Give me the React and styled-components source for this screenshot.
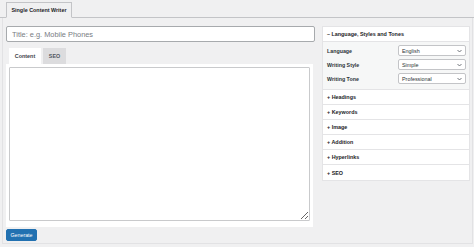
import React from "react";
import styled, { createGlobalStyle } from "styled-components";

const Global = createGlobalStyle`
  html, body { margin: 0; padding: 0; background: #f0f0f1; }
  body { font-family: "Liberation Sans", Arial, sans-serif; color: #1d2327; width: 474px; height: 247px; overflow: hidden; -webkit-font-smoothing: antialiased; }
  * { box-sizing: border-box; }
`;

const NavWrapper = styled.div`
  display: flex;
  height: 18px;
  padding: 2px 0 0 6px;
  border-bottom: 1px solid #c3c4c7;
`;

const NavTab = styled.div`
  width: 66px;
  height: 16px;
  margin-bottom: -1px;
  border: 1px solid #c3c4c7;
  border-bottom-color: #f0f0f1;
  background: #f0f0f1;
  font-size: 5.4px;
  font-weight: 700;
  display: flex;
  align-items: center;
  justify-content: center;
  color: #1d2327;
`;

const Wrap = styled.div`
  margin: 0 1px 0 2px;
  height: 226px;
  border: 1px solid #e2e2e4;
  border-top: none;
  padding: 8px 2px 0 3px;
  display: grid;
  grid-template-columns: 309px 148px;
  column-gap: 7px;
  align-items: start;
`;

const LeftCol = styled.div`
  display: flex;
  flex-direction: column;
`;

const TitleInput = styled.input`
  width: 309px;
  height: 16px;
  border: 1px solid #a7aaad;
  border-radius: 2px;
  background: #fff;
  padding: 0 5px;
  font-family: inherit;
  font-size: 7.4px;
  outline: none;
  &::placeholder { color: #787c82; }
`;

const Tabs = styled.div`
  display: flex;
  gap: 2px;
  margin: 6px 0 0 3px;
`;

const Tab = styled.div`
  height: 16px;
  width: ${(p) => p.$w}px;
  display: flex;
  align-items: center;
  justify-content: center;
  font-size: 5.4px;
  font-weight: 700;
  color: ${(p) => (p.$active ? "#3c434a" : "#50575e")};
  background: ${(p) => (p.$active ? "#fff" : "#dcdcde")};
`;

const ContentPanel = styled.div`
  width: 307px;
  height: 163px;
  background: #fff;
  padding: 3px 3px 6px 3px;
  display: flex;
`;

const TextArea = styled.textarea`
  flex: 1;
  height: 154px;
  border: 1px solid #c9cacc;
  border-radius: 1px;
  resize: both;
  outline: none;
  background: #fff;
`;

const Button = styled.button`
  align-self: flex-start;
  margin-top: 2px;
  height: 12px;
  width: 31px;
  padding: 0;
  border: 1px solid #2271b1;
  border-radius: 2px;
  background: #2271b1;
  color: #fff;
  font-family: inherit;
  font-size: 5.3px;
  cursor: pointer;
`;

const Side = styled.div`
  background: #fff;
  border: 1px solid #e4e4e6;
  display: flex;
  flex-direction: column;
`;

const SideHeader = styled.div`
  height: 15px;
  padding-left: 4px;
  display: flex;
  align-items: center;
  font-size: 5.4px;
  font-weight: 700;
  color: #1d2327;
  border-bottom: 1px solid #e4e4e6;
`;

const Fields = styled.div`
  background: #f6f7f7;
  padding: 3px 3px 5px 4px;
  display: flex;
  flex-direction: column;
  gap: 3px;
  border-bottom: 1px solid #e4e4e6;
`;

const FieldRow = styled.div`
  display: flex;
  align-items: center;
  justify-content: space-between;
  height: 11px;
`;

const Label = styled.span`
  font-size: 5.3px;
  font-weight: 700;
  color: #2c3338;
`;

const Select = styled.div`
  width: 68px;
  height: 11px;
  background: #fff;
  border: 1px solid #c3c4c7;
  border-radius: 2px;
  display: flex;
  align-items: center;
  justify-content: space-between;
  padding: 0 3px 0 3px;
  font-size: 5.4px;
  color: #2c3338;
`;

const Row = styled.div`
  height: 15px;
  padding-left: 4px;
  display: flex;
  align-items: center;
  font-size: 5.4px;
  font-weight: 700;
  color: #1d2327;
  border-bottom: ${(p) => (p.$last ? "none" : "1px solid #e4e4e6")};
`;

const Chevron = () => (
  <svg width="5" height="4" viewBox="0 0 10 6" fill="none">
    <path d="M1 1l4 4 4-4" stroke="#50575e" strokeWidth="1.6" />
  </svg>
);

const fields = [
  ["Language", "English"],
  ["Writing Style", "Simple"],
  ["Writing Tone", "Professional"],
];

const sections = ["Headings", "Keywords", "Image", "Addition", "Hyperlinks", "SEO"];

export default function App() {
  return (
    <>
      <Global />
      <NavWrapper>
        <NavTab>Single Content Writer</NavTab>
      </NavWrapper>
      <Wrap>
        <LeftCol>
          <TitleInput placeholder="Title: e.g. Mobile Phones" />
          <Tabs>
            <Tab $active $w={32}>Content</Tab>
            <Tab $w={23}>SEO</Tab>
          </Tabs>
          <ContentPanel>
            <TextArea />
          </ContentPanel>
          <Button>Generate</Button>
        </LeftCol>
        <Side>
          <SideHeader>– Language, Styles and Tones</SideHeader>
          <Fields>
            {fields.map(([l, v]) => (
              <FieldRow key={l}>
                <Label>{l}</Label>
                <Select>
                  <span>{v}</span>
                  <Chevron />
                </Select>
              </FieldRow>
            ))}
          </Fields>
          {sections.map((s, i) => (
            <Row key={s} $last={i === sections.length - 1}>+ {s}</Row>
          ))}
        </Side>
      </Wrap>
    </>
  );
}
